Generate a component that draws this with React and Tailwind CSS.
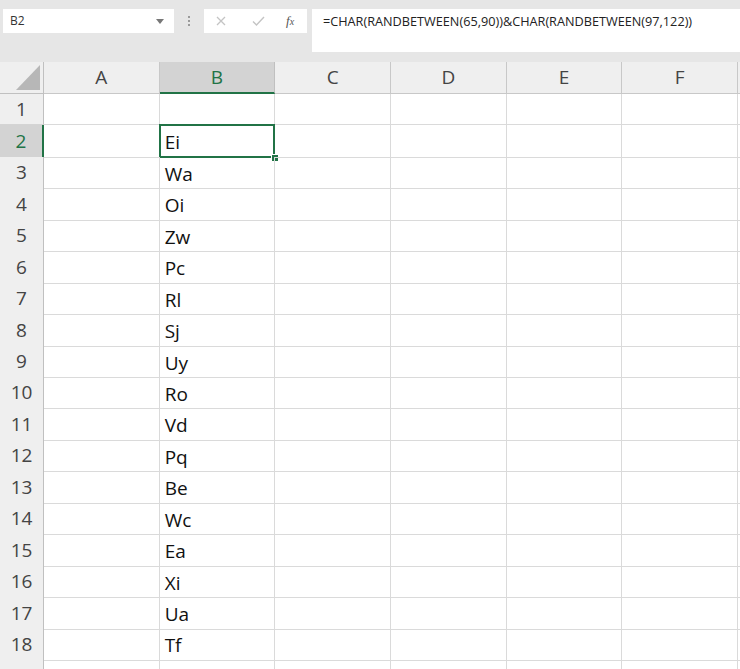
import React from 'react';

const columns = ['A', 'B', 'C', 'D', 'E', 'F'];
const values = ['', 'Ei', 'Wa', 'Oi', 'Zw', 'Pc', 'Rl', 'Sj', 'Uy', 'Ro', 'Vd', 'Pq', 'Be', 'Wc', 'Ea', 'Xi', 'Ua', 'Tf', ''];

const gridCols = 'grid grid-cols-[44px_repeat(6,115.67px)_1fr]';
const font = { fontFamily: '"Open Sans", "Noto Sans", sans-serif' };

const FormulaBar = () => (
  <div className="flex items-start h-[62px] bg-[#e6e6e6] pl-[3px] pt-[9px]">
    {/* name box */}
    <div className="w-[171px] h-[24px] bg-white flex items-center justify-between pl-[7px] pr-[10px] text-[12px] text-[#333]">
      <span>B2</span>
      <svg width="8" height="5" viewBox="0 0 8 5">
        <polygon points="0,0 8,0 4,5" fill="#777" />
      </svg>
    </div>
    <div className="w-[30px] h-[24px] flex flex-col items-center justify-center gap-[2px]">
      <span className="w-[2px] h-[2px] bg-[#9a9a9a]" />
      <span className="w-[2px] h-[2px] bg-[#9a9a9a]" />
      <span className="w-[2px] h-[2px] bg-[#9a9a9a]" />
    </div>
    {/* cancel / enter / fx */}
    <div className="w-[103px] h-[24px] bg-white flex items-center">
      <svg className="ml-[12px]" width="10" height="10" viewBox="0 0 10 10">
        <path d="M1 1 L9 9 M9 1 L1 9" stroke="#c4c4c4" strokeWidth="1.3" />
      </svg>
      <svg className="ml-[26px]" width="13" height="10" viewBox="0 0 13 10">
        <path d="M1 5.5 L4.5 9 L12 1" stroke="#c4c4c4" strokeWidth="1.4" fill="none" />
      </svg>
      <span className="ml-[21px] italic text-[13px] text-[#555]" style={{ fontFamily: '"Liberation Serif", serif' }}>
        f<span className="text-[10px]">x</span>
      </span>
    </div>
    {/* formula */}
    <div className="ml-[5px] flex-1 h-[43px] bg-white pl-[11px] pt-[3px] text-[12.7px] text-[#222]">
      =CHAR(RANDBETWEEN(65,90))&amp;CHAR(RANDBETWEEN(97,122))
    </div>
  </div>
);

const HeaderRow = () => (
  <div className={`${gridCols} h-[32px] bg-[#efefef]`}>
    <div className="relative border-r border-b border-[#c0c0c0]">
      <svg className="absolute left-0 top-0" width="44" height="32" viewBox="0 0 44 32">
        <polygon points="40,3 40,28 16,28" fill="#b7b7b7" />
      </svg>
    </div>
    {columns.map((c) =>
      c === 'B' ? (
        <div
          key={c}
          className="flex items-center justify-center bg-[#d3d3d3] border-r border-[#c0c0c0] border-b-2 border-b-[#217346] text-[19px] text-[#217346]"
        >
          {c}
        </div>
      ) : (
        <div key={c} className="flex items-center justify-center border-r border-b border-[#c8c8c8] text-[19px] text-[#444]">
          {c}
        </div>
      )
    )}
    <div className="border-b border-[#c8c8c8]" />
  </div>
);

const Row = ({ n, value, label = true }) => {
  const active = n === 2;
  return (
    <div className={`${gridCols} h-[31.45px] bg-white`}>
      <div
        className={
          active
            ? 'flex items-center justify-center bg-[#d3d3d3] border-b border-[#c8c8c8] border-r-2 border-r-[#217346] text-[19px] text-[#217346]'
            : 'flex items-center justify-center bg-[#efefef] border-b border-[#d4d4d4] border-r border-r-[#c0c0c0] text-[19px] text-[#444]'
        }
      >
        {label ? n : ''}
      </div>
      {columns.map((c) => (
        <div key={c} className="relative border-r border-b border-[#dadada] flex items-center pl-[5px] pt-[3px] text-[19px] text-[#111]">
          {c === 'B' ? value : ''}
          {c === 'B' && active && (
            <>
              <div className="absolute -left-px -top-px -right-px -bottom-px border-2 border-[#217346]" />
              <div className="absolute -right-[4px] -bottom-[4px] w-[6px] h-[6px] bg-[#217346] outline outline-1 outline-white" />
            </>
          )}
        </div>
      ))}
      <div className="border-b border-[#dadada]" />
    </div>
  );
};

export default function App() {
  return (
    <div className="w-[740px] h-[669px] overflow-hidden bg-white" style={font}>
      <FormulaBar />
      <HeaderRow />
      {values.map((v, i) => (
        <Row key={i} n={i + 1} value={v} label={i < 18} />
      ))}
    </div>
  );
}
